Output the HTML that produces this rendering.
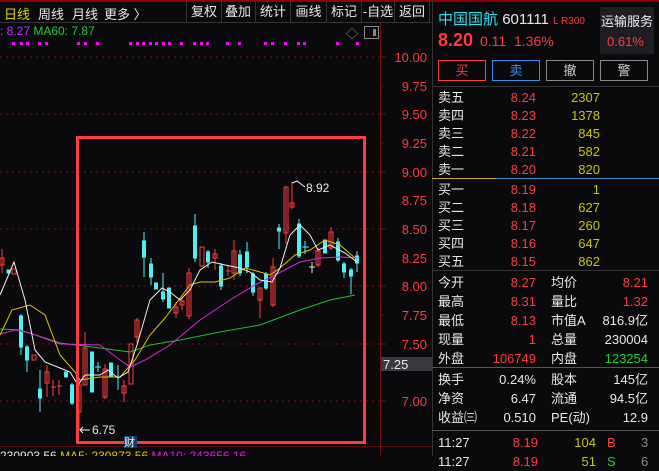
<!DOCTYPE html>
<html><head><meta charset="utf-8"><style>
body{margin:0;width:659px;height:456px;background:#0a0a0d;overflow:hidden;font-family:"Liberation Sans","Noto Sans CJK SC",sans-serif;position:relative}
.a{position:absolute;white-space:nowrap}
.tb{position:absolute;top:2px;height:20px;border-right:1px solid #333;color:#e8e8e8;font-size:13px;line-height:20px;text-align:center}
.r{color:#ff3b3b}.g{color:#22cc33}.y{color:#c8c800}.w{color:#e8e8e8}.c{color:#2de0ee}
</style></head><body>
<div class="a" style="left:0;top:0;width:659px;height:2px;background:#8b0000"></div>
<div class="a" style="left:0;top:22px;width:432px;height:1px;background:#333"></div>
<div class="a" style="left:4px;top:4px;font-size:13px;color:#d8d800">日线</div>
<div class="a" style="left:38px;top:4px;font-size:13px;color:#e8e8e8">周线</div>
<div class="a" style="left:72px;top:4px;font-size:13px;color:#e8e8e8">月线</div>
<div class="a" style="left:104px;top:4px;font-size:13px;color:#e8e8e8">更多 〉</div>
<div class="tb" style="left:186px;width:34px;border-left:1px solid #333">复权</div>
<div class="tb" style="left:221px;width:34px">叠加</div>
<div class="tb" style="left:256px;width:34px">统计</div>
<div class="tb" style="left:291px;width:35px">画线</div>
<div class="tb" style="left:327px;width:34px">标记</div>
<div class="tb" style="left:362px;width:32px">-自选</div>
<div class="tb" style="left:395px;width:34px">返回</div>
<div class="a" style="left:0;top:24px;font-size:12px"><span style="color:#c030ff">: 8.27</span> <span class="g">MA60: 7.87</span></div>
<div class="a" style="left:346px;top:25px;font-size:12px;color:#888">◇</div>
<div class="a" style="left:364px;top:26px;width:13px;height:11px;border:1px solid #888"><div style="position:absolute;right:2px;top:2px;width:3px;height:7px;background:#888"></div></div>
<svg class="a" style="left:0;top:0" width="432" height="456">
<g fill="#ff00ff">
<rect x="12" y="42" width="3" height="3"/><rect x="20" y="42" width="3" height="3"/><rect x="26" y="42" width="3" height="3"/><rect x="38" y="42" width="3" height="3"/><rect x="45" y="42" width="3" height="3"/><rect x="77" y="42" width="3" height="3"/><rect x="84" y="42" width="3" height="3"/><rect x="96" y="42" width="3" height="3"/><rect x="129" y="42" width="3" height="3"/><rect x="136" y="42" width="3" height="3"/><rect x="142" y="42" width="3" height="3"/><rect x="149" y="42" width="3" height="3"/><rect x="155" y="42" width="3" height="3"/><rect x="162" y="42" width="3" height="3"/><rect x="168" y="42" width="3" height="3"/><rect x="180" y="42" width="3" height="3"/><rect x="193" y="42" width="3" height="3"/><rect x="200" y="42" width="3" height="3"/><rect x="206" y="42" width="3" height="3"/><rect x="226" y="42" width="3" height="3"/><rect x="238" y="42" width="3" height="3"/><rect x="264" y="42" width="3" height="3"/><rect x="271" y="42" width="3" height="3"/><rect x="284" y="42" width="3" height="3"/><rect x="297" y="42" width="3" height="3"/><rect x="303" y="42" width="3" height="3"/><rect x="336" y="42" width="3" height="3"/><rect x="356" y="42" width="3" height="3"/>
</g>
<g stroke="#7a1010" stroke-dasharray="2,4" stroke-width="1">
<line x1="0" y1="57" x2="380" y2="57"/><line x1="0" y1="114" x2="380" y2="114"/><line x1="0" y1="172" x2="380" y2="172"/><line x1="0" y1="229" x2="380" y2="229"/><line x1="0" y1="286" x2="380" y2="286"/><line x1="0" y1="344" x2="380" y2="344"/><line x1="0" y1="401" x2="380" y2="401"/>
</g>
<line x1="380.5" y1="23" x2="380.5" y2="456" stroke="#7a0a0a"/>
<line x1="0" y1="446.5" x2="432" y2="446.5" stroke="#5a0a0a"/>
<g stroke="#7a0a0a"><line x1="380" y1="57" x2="386" y2="57"/><line x1="380" y1="86" x2="383" y2="86"/><line x1="380" y1="114" x2="386" y2="114"/><line x1="380" y1="143" x2="383" y2="143"/><line x1="380" y1="172" x2="386" y2="172"/><line x1="380" y1="200" x2="383" y2="200"/><line x1="380" y1="229" x2="386" y2="229"/><line x1="380" y1="258" x2="383" y2="258"/><line x1="380" y1="286" x2="386" y2="286"/><line x1="380" y1="315" x2="383" y2="315"/><line x1="380" y1="344" x2="386" y2="344"/><line x1="380" y1="401" x2="386" y2="401"/></g>
<g fill="#ff3b3b" font-size="13" text-anchor="end" font-family="Liberation Sans">
<text x="427" y="62">10.00</text><text x="427" y="91">9.75</text><text x="427" y="119">9.50</text><text x="427" y="148">9.25</text><text x="427" y="177">9.00</text><text x="427" y="205">8.75</text><text x="427" y="234">8.50</text><text x="427" y="263">8.25</text><text x="427" y="291">8.00</text><text x="427" y="320">7.75</text><text x="427" y="349">7.50</text><text x="427" y="406">7.00</text>
</g>
<rect x="381" y="357" width="51" height="14" fill="#3a3a3e"/>
<text x="383" y="369" fill="#e8e8e8" font-size="13" font-family="Liberation Sans">7.25</text>
<g stroke-width="1">
<g fill="none" stroke="#ff3b3b">
<line x1="2" y1="249" x2="2" y2="273"/><rect x="0" y="258" width="4" height="7"/>
<rect x="12" y="269" width="4" height="5"/>
<rect x="32" y="355" width="4" height="5"/>
<line x1="47" y1="365" x2="47" y2="397"/><rect x="45" y="372" width="4" height="11"/>
<line x1="53" y1="380" x2="53" y2="396"/><line x1="51" y1="387" x2="56" y2="387"/>
<line x1="59" y1="380" x2="59" y2="395"/><line x1="57" y1="386" x2="62" y2="386"/>
<line x1="79" y1="380" x2="79" y2="430"/><rect x="77" y="385" width="4" height="27"/>
<line x1="85" y1="332" x2="85" y2="385"/><rect x="83" y="348" width="4" height="37"/>
<line x1="105" y1="364" x2="105" y2="399"/><rect x="103" y="369" width="4" height="28"/>
<line x1="124" y1="380" x2="124" y2="402"/><rect x="122" y="386" width="4" height="7"/>
<rect x="129" y="344" width="4" height="40"/>
<line x1="137" y1="318" x2="137" y2="343"/><rect x="135" y="320" width="4" height="17"/>
<rect x="174" y="307" width="4" height="6"/><line x1="176" y1="302" x2="176" y2="318"/>
<line x1="182" y1="298" x2="182" y2="310"/><rect x="180" y="301" width="4" height="4"/>
<line x1="189" y1="268" x2="189" y2="319"/><rect x="187" y="273" width="4" height="43"/>
<rect x="200" y="247" width="4" height="19"/>
<line x1="215" y1="249" x2="215" y2="270"/><rect x="213" y="254" width="4" height="4"/>
<line x1="228" y1="265" x2="228" y2="276"/><line x1="226" y1="271" x2="231" y2="271"/>
<line x1="234" y1="240" x2="234" y2="280"/><rect x="232" y="251" width="4" height="22"/>
<line x1="260" y1="288" x2="260" y2="318"/><rect x="258" y="288" width="4" height="12"/>
<line x1="273" y1="258" x2="273" y2="307"/><rect x="271" y="267" width="4" height="38"/>
<line x1="286" y1="187" x2="286" y2="244"/><rect x="284" y="187" width="4" height="46"/>
<line x1="292" y1="182" x2="292" y2="209"/><rect x="290" y="203" width="4" height="4"/>
<line x1="318" y1="248" x2="318" y2="267"/><rect x="316" y="251" width="4" height="14"/>
<line x1="331" y1="227" x2="331" y2="250"/><rect x="329" y="232" width="4" height="16"/>
</g>
<g fill="#4ff0f5" stroke="#4ff0f5">
<rect x="7" y="270" width="3" height="3"/>
<line x1="21" y1="314" x2="21" y2="355"/><rect x="19.5" y="316" width="3" height="31"/>
<line x1="27" y1="345" x2="27" y2="372"/><rect x="25.5" y="347" width="3" height="13"/>
<line x1="40" y1="370" x2="40" y2="412"/><rect x="38.5" y="389" width="3" height="9"/>
<rect x="64.5" y="372" width="3" height="5"/>
<line x1="72" y1="383" x2="72" y2="405"/><rect x="70.5" y="385" width="3" height="18"/>
<rect x="90.5" y="352" width="3" height="40"/>
<line x1="95" y1="367" x2="101" y2="367"/><line x1="98" y1="362" x2="98" y2="372"/>
<rect x="109.5" y="363" width="3" height="14"/>
<line x1="118" y1="365" x2="118" y2="390"/><line x1="115" y1="377" x2="121" y2="377"/>
<line x1="144" y1="232" x2="144" y2="277"/><rect x="142.5" y="241" width="3" height="16"/>
<line x1="151" y1="258" x2="151" y2="285"/><rect x="149.5" y="264" width="3" height="13"/>
<rect x="154.5" y="283" width="3" height="6"/>
<line x1="163" y1="273" x2="163" y2="302"/><rect x="161.5" y="292" width="3" height="7"/>
<rect x="167.5" y="288" width="3" height="20"/>
<line x1="195" y1="214" x2="195" y2="262"/><rect x="193.5" y="226" width="3" height="32"/>
<line x1="208" y1="250" x2="208" y2="268"/><rect x="206.5" y="252" width="3" height="10"/>
<line x1="221" y1="263" x2="221" y2="290"/><rect x="219.5" y="266" width="3" height="20"/>
<line x1="240" y1="250" x2="240" y2="276"/><rect x="238.5" y="255" width="3" height="18"/>
<line x1="247" y1="242" x2="247" y2="273"/><rect x="245.5" y="252" width="3" height="15"/>
<line x1="253" y1="272" x2="253" y2="296"/><rect x="251.5" y="274" width="3" height="18"/>
<line x1="266" y1="272" x2="266" y2="290"/><rect x="264.5" y="274" width="3" height="14"/>
<line x1="279" y1="224" x2="279" y2="249"/><rect x="277.5" y="228" width="3" height="3"/>
<line x1="299" y1="219" x2="299" y2="258"/><rect x="297.5" y="224" width="3" height="32"/>
<line x1="302" y1="247" x2="309" y2="247"/><line x1="305" y1="241" x2="305" y2="254"/>
<rect x="323.5" y="240" width="3" height="13"/>
<line x1="338" y1="238" x2="338" y2="262"/><rect x="336.5" y="242" width="3" height="18"/>
<line x1="344" y1="262" x2="344" y2="278"/><rect x="342.5" y="264" width="3" height="8"/>
<line x1="351" y1="268" x2="351" y2="294"/><rect x="349.5" y="270" width="3" height="6"/>
<line x1="357" y1="251" x2="357" y2="272"/><rect x="355.5" y="256" width="3" height="7"/>
</g>
<g stroke="#e8e8e8"><line x1="309" y1="267" x2="315" y2="267"/><line x1="312" y1="262" x2="312" y2="273"/></g>
</g>
<g fill="none" stroke-width="1">
<polyline stroke="#22bb33" points="0,329 20,330 60,343 100,348 130,352 150,345 180,340 220,332 260,325 300,310 330,300 355,295"/>
<polyline stroke="#dd22dd" points="0,334 15,330 30,333 60,344 100,345 120,360 130,367 145,360 170,345 200,320 230,300 255,285 275,275 300,262 320,258 340,257 357,258"/>
<polyline stroke="#e0c000" points="0,335 12,310 30,305 45,315 60,355 75,372 80,380 100,377 120,377 135,360 150,335 165,318 190,285 200,282 215,282 230,278 245,268 260,272 270,275 280,268 295,255 310,250 325,240 340,245 355,258"/>
<polyline stroke="#f0f0f0" points="0,295 14,262 25,300 35,350 45,362 60,368 70,372 78,385 85,375 100,375 108,370 118,378 128,372 137,345 150,300 162,288 170,292 180,300 190,290 200,270 212,262 225,265 240,268 250,272 260,280 272,282 280,268 290,235 300,225 310,235 318,250 330,245 345,253 357,262"/>
</g>
<rect x="77.5" y="137.5" width="287" height="305" fill="none" stroke="#ff3b3b" stroke-width="3"/>
<g stroke="#f0f0f0" fill="none"><polyline points="292,183 297,181 305,187"/><polyline points="80,430 90,430"/><polyline points="83,427 80,430 83,433"/></g>
<text x="306" y="192" fill="#e8e8e8" font-size="12" font-family="Liberation Sans">8.92</text>
<text x="92" y="434" fill="#e8e8e8" font-size="12" font-family="Liberation Sans">6.75</text>
<rect x="124" y="436" width="13" height="12" fill="#103a6a"/>
<text x="124" y="446" fill="#fff" font-size="11" font-family="Noto Sans CJK SC">财</text>
<text x="0" y="460" fill="#e8e8e8" font-size="12" font-family="Liberation Sans">230903.56 <tspan fill="#e0c000">MA5: 230873.56</tspan> <tspan fill="#dd22dd">MA10: 243656.16</tspan></text>
</svg>
<div class="a" style="left:432px;top:0;width:1px;height:456px;background:#333"></div>
<div class="a" style="left:438px;top:8px;font-size:15px"><span class="c">中国国航</span> <span class="w">601111</span> <span class="r" style="font-size:10px">L R300</span></div>
<div class="a" style="left:600px;top:7px;width:54px;height:47px;background:#1e1e22"></div>
<div class="a" style="left:601px;top:11px;font-size:13px;color:#eee">运输服务</div>
<div class="a" style="left:607px;top:34px;font-size:13px"><span class="r">0.61%</span></div>
<div class="a r" style="left:438px;top:30px;font-size:18px;font-weight:bold">8.20</div>
<div class="a r" style="left:480px;top:33px;font-size:14px">0.11&nbsp;&nbsp;1.36%</div>
<div class="a" style="left:438px;top:60px;width:46px;height:19px;border:1px solid #ff3b3b;color:#ff3b3b;text-align:center;font-size:13px;line-height:19px">买</div>
<div class="a" style="left:492px;top:60px;width:46px;height:19px;border:1px solid #3a8ee6;color:#3a8ee6;text-align:center;font-size:13px;line-height:19px">卖</div>
<div class="a" style="left:546px;top:60px;width:46px;height:19px;border:1px solid #888;color:#ccc;text-align:center;font-size:13px;line-height:19px">撤</div>
<div class="a" style="left:600px;top:60px;width:46px;height:19px;border:1px solid #888;color:#ccc;text-align:center;font-size:13px;line-height:19px">警</div>
<div class="a" style="left:432px;top:86px;width:227px;height:1px;background:#333"></div>
<div class="a" style="left:432px;top:178px;width:64px;height:1px;background:#d4a040"></div>
<div class="a" style="left:496px;top:178px;width:163px;height:1px;background:#3a8ec6"></div>
<div class="a" style="left:432px;top:270px;width:227px;height:1px;background:#333"></div>
<div class="a" style="left:432px;top:367px;width:227px;height:1px;background:#555"></div>
<div class="a" style="left:432px;top:430px;width:227px;height:1px;background:#555"></div>
<div style="position:absolute;left:438px;top:89px;font-size:13px;line-height:18px;color:#e8e8e8">卖五<br>卖四<br>卖三<br>卖二<br>卖一</div>
<div class="r" style="position:absolute;left:486px;width:50px;text-align:right;top:89px;font-size:13px;line-height:18px">8.24<br>8.23<br>8.22<br>8.21<br>8.20</div>
<div class="y" style="position:absolute;left:550px;width:50px;text-align:right;top:89px;font-size:13px;line-height:18px">2307<br>1378<br>845<br>582<br>820</div>
<div style="position:absolute;left:438px;top:181px;font-size:13px;line-height:18px;color:#e8e8e8">买一<br>买二<br>买三<br>买四<br>买五</div>
<div class="r" style="position:absolute;left:486px;width:50px;text-align:right;top:181px;font-size:13px;line-height:18px">8.19<br>8.18<br>8.17<br>8.16<br>8.15</div>
<div class="y" style="position:absolute;left:550px;width:50px;text-align:right;top:181px;font-size:13px;line-height:18px">1<br>627<br>260<br>647<br>862</div>
<div style="position:absolute;left:438px;top:273px;font-size:13px;line-height:19px;color:#e8e8e8">今开<br>最高<br>最低<br>现量<br>外盘</div>
<div class="r" style="position:absolute;left:476px;width:60px;text-align:right;top:273px;font-size:13px;line-height:19px">8.27<br>8.31<br>8.13<br>1<br>106749</div>
<div style="position:absolute;left:551px;top:273px;font-size:13px;line-height:19px;color:#e8e8e8">均价<br>量比<br>市值A<br>总量<br>内盘</div>
<div style="position:absolute;left:590px;width:58px;text-align:right;top:273px;font-size:13px;line-height:19px;color:#e8e8e8"><span class="r">8.21</span><br><span class="r">1.32</span><br>816.9亿<br>230004<br><span class="g">123254</span></div>
<div style="position:absolute;left:438px;top:370px;font-size:13px;line-height:19px;color:#e8e8e8">换手<br>净资<br>收益㈢</div>
<div style="position:absolute;left:476px;width:60px;text-align:right;top:370px;font-size:13px;line-height:19px;color:#e8e8e8">0.24%<br>6.47<br>0.510</div>
<div style="position:absolute;left:551px;top:370px;font-size:13px;line-height:19px;color:#e8e8e8">股本<br>流通<br>PE(动)</div>
<div style="position:absolute;left:590px;width:58px;text-align:right;top:370px;font-size:13px;line-height:19px;color:#e8e8e8">145亿<br>94.5亿<br>12.9</div>
<div class="a" style="left:438px;top:433px;font-size:13px;line-height:19px;color:#e8e8e8">11:27<br>11:27</div>
<div class="a r" style="left:488px;width:50px;text-align:right;top:433px;font-size:13px;line-height:19px">8.19<br>8.19</div>
<div class="a y" style="left:556px;width:40px;text-align:right;top:433px;font-size:13px;line-height:19px">104<br>51</div>
<div class="a" style="left:607px;top:433px;font-size:13px;line-height:19px"><span class="r">B</span><br><span class="g">S</span></div>
<div class="a" style="left:641px;top:433px;font-size:13px;line-height:19px;color:#888">3<br>6</div>
</body></html>
